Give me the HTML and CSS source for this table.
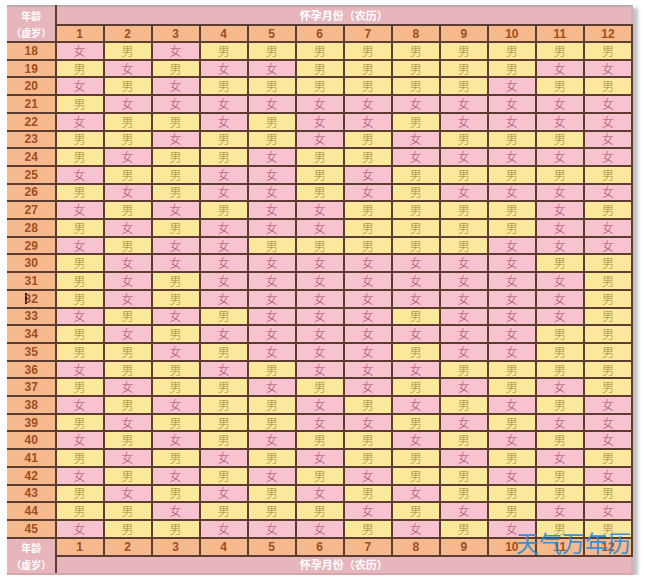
FILE: index.html
```html
<!DOCTYPE html>
<html lang="zh">
<head>
<meta charset="utf-8">
<title>清宫图</title>
<link rel="stylesheet" href="styles.css">
</head>
<body>
<div class="wrap">
<table class="chart">
<thead>
<tr class="hrow1"><th class="age-head" rowspan="2">年龄<br>（虚岁）</th><th class="month-title" colspan="12">怀孕月份（农历）</th></tr>
<tr class="hrow2"><th class="num">1</th><th class="num">2</th><th class="num">3</th><th class="num">4</th><th class="num">5</th><th class="num">6</th><th class="num">7</th><th class="num">8</th><th class="num">9</th><th class="num">10</th><th class="num">11</th><th class="num">12</th></tr>
</thead>
<tbody>
<tr><th class="age">18</th><td class="f">女</td><td class="m">男</td><td class="f">女</td><td class="m">男</td><td class="m">男</td><td class="m">男</td><td class="m">男</td><td class="m">男</td><td class="m">男</td><td class="m">男</td><td class="m">男</td><td class="m">男</td></tr>
<tr><th class="age">19</th><td class="m">男</td><td class="f">女</td><td class="m">男</td><td class="f">女</td><td class="f">女</td><td class="m">男</td><td class="m">男</td><td class="m">男</td><td class="m">男</td><td class="m">男</td><td class="f">女</td><td class="f">女</td></tr>
<tr><th class="age">20</th><td class="f">女</td><td class="m">男</td><td class="f">女</td><td class="m">男</td><td class="m">男</td><td class="m">男</td><td class="m">男</td><td class="m">男</td><td class="m">男</td><td class="f">女</td><td class="m">男</td><td class="m">男</td></tr>
<tr><th class="age">21</th><td class="m">男</td><td class="f">女</td><td class="f">女</td><td class="f">女</td><td class="f">女</td><td class="f">女</td><td class="f">女</td><td class="f">女</td><td class="f">女</td><td class="f">女</td><td class="f">女</td><td class="f">女</td></tr>
<tr><th class="age">22</th><td class="f">女</td><td class="m">男</td><td class="m">男</td><td class="f">女</td><td class="m">男</td><td class="f">女</td><td class="f">女</td><td class="m">男</td><td class="f">女</td><td class="f">女</td><td class="f">女</td><td class="f">女</td></tr>
<tr><th class="age">23</th><td class="m">男</td><td class="m">男</td><td class="f">女</td><td class="m">男</td><td class="m">男</td><td class="f">女</td><td class="m">男</td><td class="f">女</td><td class="m">男</td><td class="m">男</td><td class="m">男</td><td class="f">女</td></tr>
<tr><th class="age">24</th><td class="m">男</td><td class="f">女</td><td class="m">男</td><td class="m">男</td><td class="f">女</td><td class="m">男</td><td class="m">男</td><td class="f">女</td><td class="f">女</td><td class="f">女</td><td class="f">女</td><td class="f">女</td></tr>
<tr><th class="age">25</th><td class="f">女</td><td class="m">男</td><td class="m">男</td><td class="f">女</td><td class="f">女</td><td class="m">男</td><td class="f">女</td><td class="m">男</td><td class="m">男</td><td class="m">男</td><td class="m">男</td><td class="m">男</td></tr>
<tr><th class="age">26</th><td class="m">男</td><td class="f">女</td><td class="m">男</td><td class="f">女</td><td class="f">女</td><td class="m">男</td><td class="f">女</td><td class="m">男</td><td class="f">女</td><td class="f">女</td><td class="f">女</td><td class="f">女</td></tr>
<tr><th class="age">27</th><td class="f">女</td><td class="m">男</td><td class="f">女</td><td class="m">男</td><td class="f">女</td><td class="f">女</td><td class="m">男</td><td class="m">男</td><td class="m">男</td><td class="m">男</td><td class="f">女</td><td class="m">男</td></tr>
<tr><th class="age">28</th><td class="m">男</td><td class="f">女</td><td class="m">男</td><td class="f">女</td><td class="f">女</td><td class="f">女</td><td class="m">男</td><td class="m">男</td><td class="m">男</td><td class="m">男</td><td class="f">女</td><td class="f">女</td></tr>
<tr><th class="age">29</th><td class="f">女</td><td class="m">男</td><td class="f">女</td><td class="f">女</td><td class="m">男</td><td class="m">男</td><td class="m">男</td><td class="m">男</td><td class="m">男</td><td class="f">女</td><td class="f">女</td><td class="f">女</td></tr>
<tr><th class="age">30</th><td class="m">男</td><td class="f">女</td><td class="f">女</td><td class="f">女</td><td class="f">女</td><td class="f">女</td><td class="f">女</td><td class="f">女</td><td class="f">女</td><td class="f">女</td><td class="m">男</td><td class="m">男</td></tr>
<tr><th class="age">31</th><td class="m">男</td><td class="f">女</td><td class="m">男</td><td class="f">女</td><td class="f">女</td><td class="f">女</td><td class="f">女</td><td class="f">女</td><td class="f">女</td><td class="f">女</td><td class="f">女</td><td class="m">男</td></tr>
<tr><th class="age"><span class="caret"></span>32</th><td class="m">男</td><td class="f">女</td><td class="m">男</td><td class="f">女</td><td class="f">女</td><td class="f">女</td><td class="f">女</td><td class="f">女</td><td class="f">女</td><td class="f">女</td><td class="f">女</td><td class="m">男</td></tr>
<tr><th class="age">33</th><td class="f">女</td><td class="m">男</td><td class="f">女</td><td class="m">男</td><td class="f">女</td><td class="f">女</td><td class="f">女</td><td class="m">男</td><td class="f">女</td><td class="f">女</td><td class="f">女</td><td class="m">男</td></tr>
<tr><th class="age">34</th><td class="m">男</td><td class="f">女</td><td class="m">男</td><td class="f">女</td><td class="f">女</td><td class="f">女</td><td class="f">女</td><td class="f">女</td><td class="f">女</td><td class="f">女</td><td class="m">男</td><td class="m">男</td></tr>
<tr><th class="age">35</th><td class="m">男</td><td class="m">男</td><td class="f">女</td><td class="m">男</td><td class="f">女</td><td class="f">女</td><td class="f">女</td><td class="m">男</td><td class="f">女</td><td class="f">女</td><td class="m">男</td><td class="m">男</td></tr>
<tr><th class="age">36</th><td class="f">女</td><td class="m">男</td><td class="m">男</td><td class="f">女</td><td class="m">男</td><td class="f">女</td><td class="f">女</td><td class="f">女</td><td class="m">男</td><td class="m">男</td><td class="m">男</td><td class="m">男</td></tr>
<tr><th class="age">37</th><td class="m">男</td><td class="f">女</td><td class="m">男</td><td class="m">男</td><td class="f">女</td><td class="m">男</td><td class="f">女</td><td class="m">男</td><td class="f">女</td><td class="m">男</td><td class="f">女</td><td class="m">男</td></tr>
<tr><th class="age">38</th><td class="f">女</td><td class="m">男</td><td class="f">女</td><td class="m">男</td><td class="m">男</td><td class="f">女</td><td class="m">男</td><td class="f">女</td><td class="m">男</td><td class="f">女</td><td class="m">男</td><td class="f">女</td></tr>
<tr><th class="age">39</th><td class="m">男</td><td class="f">女</td><td class="m">男</td><td class="m">男</td><td class="m">男</td><td class="f">女</td><td class="f">女</td><td class="m">男</td><td class="f">女</td><td class="m">男</td><td class="f">女</td><td class="f">女</td></tr>
<tr><th class="age">40</th><td class="f">女</td><td class="m">男</td><td class="f">女</td><td class="m">男</td><td class="f">女</td><td class="m">男</td><td class="m">男</td><td class="f">女</td><td class="m">男</td><td class="f">女</td><td class="m">男</td><td class="f">女</td></tr>
<tr><th class="age">41</th><td class="m">男</td><td class="f">女</td><td class="m">男</td><td class="f">女</td><td class="m">男</td><td class="f">女</td><td class="m">男</td><td class="m">男</td><td class="f">女</td><td class="m">男</td><td class="f">女</td><td class="m">男</td></tr>
<tr><th class="age">42</th><td class="f">女</td><td class="m">男</td><td class="f">女</td><td class="m">男</td><td class="f">女</td><td class="m">男</td><td class="f">女</td><td class="m">男</td><td class="m">男</td><td class="f">女</td><td class="m">男</td><td class="f">女</td></tr>
<tr><th class="age">43</th><td class="m">男</td><td class="f">女</td><td class="m">男</td><td class="f">女</td><td class="m">男</td><td class="f">女</td><td class="m">男</td><td class="f">女</td><td class="m">男</td><td class="m">男</td><td class="m">男</td><td class="m">男</td></tr>
<tr><th class="age">44</th><td class="m">男</td><td class="m">男</td><td class="f">女</td><td class="m">男</td><td class="m">男</td><td class="m">男</td><td class="f">女</td><td class="m">男</td><td class="f">女</td><td class="m">男</td><td class="f">女</td><td class="f">女</td></tr>
<tr><th class="age">45</th><td class="f">女</td><td class="m">男</td><td class="m">男</td><td class="f">女</td><td class="f">女</td><td class="f">女</td><td class="m">男</td><td class="f">女</td><td class="m">男</td><td class="f">女</td><td class="m">男</td><td class="m">男</td></tr>
</tbody>
<tfoot>
<tr class="frow1"><th class="age-foot" rowspan="2">年龄<br>（虚岁）</th><th class="num">1</th><th class="num">2</th><th class="num">3</th><th class="num">4</th><th class="num">5</th><th class="num">6</th><th class="num">7</th><th class="num">8</th><th class="num">9</th><th class="num">10</th><th class="num">11</th><th class="num">12</th></tr>
<tr class="frow2"><th class="month-foot" colspan="12">怀孕月份（农历）</th></tr>
</tfoot>
</table>
<div class="watermark">天气万年历</div>
</div>
</body>
</html>
```

FILE: styles.css
```css
html, body {
  margin: 0;
  padding: 0;
  background: #ffffff;
}

body {
  font-family: "Noto Sans CJK SC", "Noto Sans", sans-serif;
}

.wrap {
  position: relative;
  width: 626px;
  margin: 5px 0 0 7px;
  box-shadow: 6px 2px 3px -1px rgba(120, 120, 120, 0.45);
}

.chart {
  border-collapse: collapse;
  table-layout: fixed;
  width: 626px;
  border: 1px solid #d2b7ba;
}

.chart th,
.chart td {
  padding: 0;
  text-align: center;
  vertical-align: middle;
  border: 2px solid #5c3d2f;
  line-height: 1;
  overflow: hidden;
  white-space: nowrap;
}

.chart td {
  font-size: 12px;
  font-weight: 300;
}

.chart tbody tr {
  height: 17.71px;
}

.hrow1 { height: 19px; }
.hrow2 { height: 17px; }
.frow1 { height: 16px; }
.frow2 { height: 16px; }

.f {
  background: #f7c3cf;
  color: #b24a70;
}

.m {
  background: #fce89c;
  color: #a5892f;
}

.num,
.age {
  background: #f6b98d;
  color: #a24d1c;
  font-family: "Liberation Sans", Arial, sans-serif;
  font-weight: bold;
  font-size: 12px;
}

.chart .age {
  border-left: 1px solid #dcc0b8;
}

.age-head,
.age-foot,
.month-title,
.month-foot {
  background: #e7b5bc;
  color: #ffffff;
  font-weight: bold;
  font-size: 11px;
}

.chart .age-head,
.chart .age-foot {
  font-size: 10px;
  line-height: 17px;
  border-left: 1px solid #dcc0b8;
}

.chart .age-head,
.chart .month-title {
  border-top: 2px solid #b9acae;
}

.chart .month-title,
.chart .month-foot {
  border-right: 2px solid #c9b3b5;
}

.chart .age-foot,
.chart .month-foot {
  border-bottom: 2px solid #d5a7ad;
}

.caret {
  display: inline-block;
  width: 2px;
  height: 11px;
  background: #1e1e1e;
  vertical-align: -1px;
  margin-right: -2px;
}

.watermark {
  position: absolute;
  left: 509px;
  top: 526px;
  font-family: "Noto Sans CJK SC", sans-serif;
  font-size: 23px;
  font-weight: 400;
  line-height: 1;
  color: #2f8fd6;
  opacity: 0.95;
  white-space: nowrap;
}
```
